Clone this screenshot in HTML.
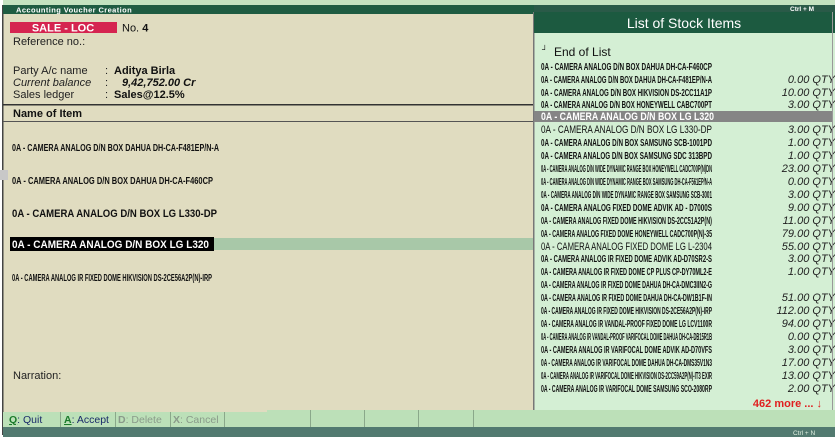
<!DOCTYPE html>
<html><head><meta charset="utf-8"><style>
html,body{margin:0;padding:0;background:#fff;width:835px;height:437px;overflow:hidden}
svg{display:block}
text{font-family:"Liberation Sans",Arial,sans-serif}
.c{font-weight:bold;font-size:10px;fill:#111}
.q{font-style:italic;font-size:11px;fill:#222}
</style></head><body>
<svg width="835" height="437" viewBox="0 0 835 437" xmlns="http://www.w3.org/2000/svg">
<!-- top strip -->
<rect x="0" y="0" width="835" height="5" fill="#c4e2c0"/>
<rect x="0" y="0" width="3" height="437" fill="#fff"/>
<!-- left panel -->
<rect x="3" y="5" width="531" height="407" fill="#e0dcc0"/>
<rect x="2" y="5" width="1.5" height="430" fill="#444"/>
<rect x="3" y="5" width="531" height="9" fill="#1f5c42"/>
<text x="16" y="12.5" font-size="7.5" font-weight="bold" fill="#fff" letter-spacing="0.4">Accounting Voucher Creation</text>
<rect x="10" y="22" width="107" height="11" fill="#d52450"/>
<text x="63" y="31.5" font-size="11" font-weight="bold" fill="#fff" text-anchor="middle">SALE - LOC</text>
<text x="122" y="31.5" font-size="11" fill="#111">No. <tspan font-weight="bold">4</tspan></text>
<text x="13" y="45" font-size="11" fill="#222">Reference no.:</text>
<text x="13" y="74" font-size="11" fill="#222">Party A/c name</text>
<text x="105" y="74" font-size="11" fill="#222">:</text>
<text x="114" y="74" font-size="11" font-weight="bold" fill="#111">Aditya Birla</text>
<text x="13" y="86" font-size="11" font-style="italic" fill="#222">Current balance</text>
<text x="105" y="86" font-size="11" fill="#222">:</text>
<text x="122" y="86" font-size="11" font-weight="bold" font-style="italic" fill="#111">9,42,752.00 Cr</text>
<text x="13" y="98" font-size="11" fill="#222">Sales ledger</text>
<text x="105" y="98" font-size="11" fill="#222">:</text>
<text x="114" y="98" font-size="11" font-weight="bold" fill="#111">Sales@12.5%</text>
<rect x="3" y="104" width="531" height="1.5" fill="#333"/>
<text x="13" y="117" font-size="11" font-weight="bold" fill="#111">Name of Item</text>
<rect x="3" y="121" width="531" height="1" fill="#555"/>
<rect x="0" y="170" width="8" height="10" fill="#c8c8c8"/>
<text class="c" x="12" y="151" textLength="207" lengthAdjust="spacingAndGlyphs">0A - CAMERA ANALOG D/N BOX DAHUA DH-CA-F481EP/N-A</text>
<text class="c" x="12" y="184" textLength="201" lengthAdjust="spacingAndGlyphs">0A - CAMERA ANALOG D/N BOX DAHUA DH-CA-F460CP</text>
<text x="12" y="217" font-size="11" font-weight="bold" fill="#111" textLength="205" lengthAdjust="spacingAndGlyphs">0A - CAMERA ANALOG D/N BOX LG L330-DP</text>
<rect x="213" y="238" width="320" height="12" fill="#a8c8a8"/>
<rect x="10" y="237" width="204" height="14" fill="#000"/>
<text x="12" y="248" font-size="11" font-weight="bold" fill="#fff" textLength="197" lengthAdjust="spacingAndGlyphs">0A - CAMERA ANALOG D/N BOX LG L320</text>
<text class="c" x="12" y="281" font-size="9" textLength="200" lengthAdjust="spacingAndGlyphs">0A - CAMERA ANALOG IR FIXED DOME HIKVISION DS-2CE56A2P(N)-IRP</text>
<text x="13" y="379" font-size="11" fill="#222">Narration:</text>
<!-- right panel -->
<rect x="534" y="5" width="301" height="7" fill="#2a5a48"/>
<text x="790" y="11" font-size="6.5" font-weight="bold" fill="#fff">Ctrl + M</text>
<rect x="534" y="12" width="301" height="398" fill="#d4efd4"/>
<rect x="533" y="12" width="1.5" height="398" fill="#777"/>
<rect x="534" y="12" width="301" height="21" fill="#1c5a40"/>
<text x="684" y="28" font-size="14" fill="#fff" text-anchor="middle" font-family="Liberation Serif,serif">List of Stock Items</text>
<text x="542" y="52" font-size="8" fill="#111">┘</text>
<text x="554" y="56" font-size="12" fill="#111">End of List</text>
<rect x="534" y="111" width="299" height="11" fill="#858585"/>
<g>
<text class="c" x="541" y="70" textLength="171" lengthAdjust="spacingAndGlyphs">0A - CAMERA ANALOG D/N BOX DAHUA DH-CA-F460CP</text>
<text class="c" x="541" y="83" textLength="171" lengthAdjust="spacingAndGlyphs">0A - CAMERA ANALOG D/N BOX DAHUA DH-CA-F481EP/N-A</text><text class="q" x="835" y="83" text-anchor="end">0.00 QTY</text>
<text class="c" x="541" y="96" textLength="171" lengthAdjust="spacingAndGlyphs">0A - CAMERA ANALOG D/N BOX HIKVISION DS-2CC11A1P</text><text class="q" x="835" y="96" text-anchor="end">10.00 QTY</text>
<text class="c" x="541" y="108" textLength="171" lengthAdjust="spacingAndGlyphs">0A - CAMERA ANALOG D/N BOX HONEYWELL CABC700PT</text><text class="q" x="835" y="108" text-anchor="end">3.00 QTY</text>
<text x="541" y="120" font-size="11" font-weight="bold" fill="#fff" textLength="173" lengthAdjust="spacingAndGlyphs">0A - CAMERA ANALOG D/N BOX LG L320</text>
<text x="541" y="133" font-size="11" fill="#111" textLength="171" lengthAdjust="spacingAndGlyphs">0A - CAMERA ANALOG D/N BOX LG L330-DP</text><text class="q" x="835" y="133" text-anchor="end">3.00 QTY</text>
<text class="c" x="541" y="146" textLength="171" lengthAdjust="spacingAndGlyphs">0A - CAMERA ANALOG D/N BOX SAMSUNG SCB-1001PD</text><text class="q" x="835" y="146" text-anchor="end">1.00 QTY</text>
<text class="c" x="541" y="159" textLength="171" lengthAdjust="spacingAndGlyphs">0A - CAMERA ANALOG D/N BOX SAMSUNG SDC 313BPD</text><text class="q" x="835" y="159" text-anchor="end">1.00 QTY</text>
<text class="c" x="541" y="172" textLength="171" lengthAdjust="spacingAndGlyphs">0A - CAMERA ANALOG D/N WIDE DYNAMIC RANGE BOX HONEYWELL CADC700P(N)DN</text><text class="q" x="835" y="172" text-anchor="end">23.00 QTY</text>
<text class="c" x="541" y="185" textLength="171" lengthAdjust="spacingAndGlyphs">0A - CAMERA ANALOG D/N WIDE DYNAMIC RANGE BOX SAMSUNG DH-CA-F561EP/N-A</text><text class="q" x="835" y="185" text-anchor="end">0.00 QTY</text>
<text class="c" x="541" y="198" textLength="171" lengthAdjust="spacingAndGlyphs">0A - CAMERA ANALOG D/N WIDE DYNAMIC RANGE BOX SAMSUNG SCB-3001</text><text class="q" x="835" y="198" text-anchor="end">3.00 QTY</text>
<text class="c" x="541" y="211" textLength="171" lengthAdjust="spacingAndGlyphs">0A - CAMERA ANALOG FIXED DOME ADVIK AD - D7000S</text><text class="q" x="835" y="211" text-anchor="end">9.00 QTY</text>
<text class="c" x="541" y="224" textLength="171" lengthAdjust="spacingAndGlyphs">0A - CAMERA ANALOG FIXED DOME HIKVISION DS-2CC51A2P(N)</text><text class="q" x="835" y="224" text-anchor="end">11.00 QTY</text>
<text class="c" x="541" y="237" textLength="171" lengthAdjust="spacingAndGlyphs">0A - CAMERA ANALOG FIXED DOME HONEYWELL CADC700P(N)-35</text><text class="q" x="835" y="237" text-anchor="end">79.00 QTY</text>
<text x="541" y="250" font-size="11" fill="#111" textLength="171" lengthAdjust="spacingAndGlyphs">0A - CAMERA ANALOG FIXED DOME LG L-2304</text><text class="q" x="835" y="250" text-anchor="end">55.00 QTY</text>
<text class="c" x="541" y="262" textLength="171" lengthAdjust="spacingAndGlyphs">0A - CAMERA ANALOG IR FIXED DOME ADVIK AD-D70SR2-S</text><text class="q" x="835" y="262" text-anchor="end">3.00 QTY</text>
<text class="c" x="541" y="275" textLength="171" lengthAdjust="spacingAndGlyphs">0A - CAMERA ANALOG IR FIXED DOME CP PLUS CP-DY70ML2-E</text><text class="q" x="835" y="275" text-anchor="end">1.00 QTY</text>
<text class="c" x="541" y="288" textLength="171" lengthAdjust="spacingAndGlyphs">0A - CAMERA ANALOG IR FIXED DOME DAHUA DH-CA-DMC3IIN2-G</text>
<text class="c" x="541" y="301" textLength="171" lengthAdjust="spacingAndGlyphs">0A - CAMERA ANALOG IR FIXED DOME DAHUA DH-CA-DW1B1F-IN</text><text class="q" x="835" y="301" text-anchor="end">51.00 QTY</text>
<text class="c" x="541" y="314" textLength="171" lengthAdjust="spacingAndGlyphs">0A - CAMERA ANALOG IR FIXED DOME HIKVISION DS-2CE56A2P(N)-IRP</text><text class="q" x="835" y="314" text-anchor="end">112.00 QTY</text>
<text class="c" x="541" y="327" textLength="171" lengthAdjust="spacingAndGlyphs">0A - CAMERA ANALOG IR VANDAL-PROOF FIXED DOME LG LCV1100R</text><text class="q" x="835" y="327" text-anchor="end">94.00 QTY</text>
<text class="c" x="541" y="340" textLength="171" lengthAdjust="spacingAndGlyphs">0A - CAMERA ANALOG IR VANDAL-PROOF VARIFOCAL DOME DAHUA DH-CA-DB15R1B</text><text class="q" x="835" y="340" text-anchor="end">0.00 QTY</text>
<text class="c" x="541" y="353" textLength="171" lengthAdjust="spacingAndGlyphs">0A - CAMERA ANALOG IR VARIFOCAL DOME ADVIK AD-D70VFS</text><text class="q" x="835" y="353" text-anchor="end">3.00 QTY</text>
<text class="c" x="541" y="366" textLength="171" lengthAdjust="spacingAndGlyphs">0A - CAMERA ANALOG IR VARIFOCAL DOME DAHUA DH-CA-DMS35V1N3</text><text class="q" x="835" y="366" text-anchor="end">17.00 QTY</text>
<text class="c" x="541" y="379" textLength="171" lengthAdjust="spacingAndGlyphs">0A - CAMERA ANALOG IR VARIFOCAL DOME HIKVISION DS-2CC59A2P(N)-IT3 EXIR</text><text class="q" x="835" y="379" text-anchor="end">13.00 QTY</text>
<text class="c" x="541" y="392" textLength="171" lengthAdjust="spacingAndGlyphs">0A - CAMERA ANALOG IR VARIFOCAL DOME SAMSUNG SCO-2080RP</text><text class="q" x="835" y="392" text-anchor="end">2.00 QTY</text>
</g>
<text x="822" y="407" font-size="11" font-weight="bold" fill="#e02020" text-anchor="end">462 more ... ↓</text>
<rect x="832" y="12" width="1" height="398" fill="#999"/>
<!-- bottom buttons -->
<rect x="3" y="412" width="264" height="15" fill="#bce0b8"/>
<rect x="267" y="410" width="568" height="17" fill="#bce0b8"/>
<g fill="#8aa88a">
<rect x="60" y="412" width="1" height="15"/><rect x="115" y="412" width="1" height="15"/><rect x="170" y="412" width="1" height="15"/><rect x="224" y="412" width="1" height="15"/>
<rect x="310" y="410" width="1" height="17"/><rect x="364" y="410" width="1" height="17"/><rect x="418" y="410" width="1" height="17"/><rect x="473" y="410" width="1" height="17"/>
</g>
<text x="9" y="423" font-size="10.5" fill="#1a2a6a"><tspan fill="#1a7a2a" font-weight="bold" text-decoration="underline">Q</tspan>: Quit</text>
<text x="64" y="423" font-size="10.5" fill="#1a2a6a"><tspan fill="#1a7a2a" font-weight="bold" text-decoration="underline">A</tspan>: Accept</text>
<text x="118" y="423" font-size="10.5" fill="#8a9a8a"><tspan font-weight="bold">D</tspan>: Delete</text>
<text x="173" y="423" font-size="10.5" fill="#8a9a8a"><tspan font-weight="bold">X</tspan>: Cancel</text>
<rect x="3" y="427" width="832" height="10" fill="#527a70"/>
<text x="793" y="435" font-size="6.5" fill="#e0f0e0">Ctrl + N</text>
</svg>
</body></html>
